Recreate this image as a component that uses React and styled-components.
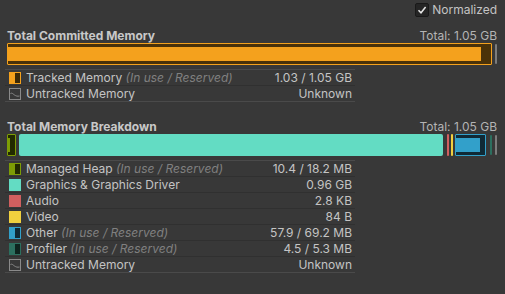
import React from "react";
import styled, { createGlobalStyle } from "styled-components";

const Global = createGlobalStyle`
  html, body { margin: 0; padding: 0; background: #383838; }
  body { font-family: Inter, "Noto Sans", sans-serif; font-size: 12px; color: #c4c4c4; }
`;

const Page = styled.div`
  width: 505px;
  height: 294px;
  background: #383838;
  display: flex;
  flex-direction: column;
  box-sizing: border-box;
`;

const Toolbar = styled.div`
  display: flex;
  justify-content: flex-end;
  align-items: center;
  height: 14px;
  padding: 3px 8px 0 0;
  gap: 3px;
`;

const CheckBox = styled.span`
  width: 12px;
  height: 12px;
  border: 1px solid #191919;
  border-radius: 2px;
  background: #252525;
  display: flex;
  align-items: center;
  justify-content: center;
`;

const ToolbarLabel = styled.span`
  line-height: 14px;
  color: #c4c4c4;
`;

const Section = styled.div`
  display: flex;
  flex-direction: column;
  margin-top: ${(p) => p.$top}px;
`;

const TitleRow = styled.div`
  display: flex;
  justify-content: space-between;
  align-items: flex-end;
  height: 16px;
  padding: 0 8px 0 7px;
`;

const Title = styled.span`
  font-weight: 700;
  color: #c8c8c8;
  line-height: 14px;
`;

const Total = styled.span`
  color: #b4b4b4;
  line-height: 14px;
`;

const Bar = styled.div`
  display: flex;
  align-items: stretch;
  height: 22px;
  margin-left: 7px;
  width: 490px;
`;

const Segment = styled.div`
  flex: none;
  box-sizing: border-box;
  margin-right: ${(p) => p.$gap || 0}px;
  background: ${(p) => p.$color};
  border-radius: ${(p) => (p.$round ? "2px" : "0")};
`;

const Thin = styled.div`
  flex: none;
  width: 2px;
  margin: ${(p) => (p.$inset ? "1px" : "0")} 0;
  margin-right: ${(p) => p.$gap || 0}px;
  background: ${(p) => p.$color};
  border-radius: 1px;
`;

const Reserved = styled.div`
  flex: none;
  box-sizing: border-box;
  border: 1px solid ${(p) => p.$color};
  border-radius: 1px;
  background: ${(p) => p.$dark};
  margin-right: ${(p) => p.$gap || 0}px;
  padding: 3px 0;
  display: flex;
`;

const Used = styled.div`
  background: ${(p) => p.$color};
  height: 100%;
`;

const Table = styled.div`
  width: 350px;
  margin: 4px 0 0 5px;
  border-top: 1px solid #4a4a4a;
  display: flex;
  flex-direction: column;
`;

const Row = styled.div`
  display: flex;
  align-items: center;
  height: 15px;
  padding: 0 3px 0 4px;
  border-bottom: 1px solid ${(p) => (p.$last ? "#4a4a4a" : "#303030")};
`;

const Label = styled.span`
  margin-left: 5px;
  flex: 1;
  white-space: nowrap;
  color: #c4c4c4;
`;

const Hint = styled.span`
  font-style: italic;
  color: #808080;
`;

const Value = styled.span`
  color: #c4c4c4;
  white-space: nowrap;
`;

const SolidIcon = styled.span`
  width: 12px;
  height: 12px;
  flex: none;
  background: ${(p) => p.$color};
`;

const SplitIcon = styled.span`
  width: 12px;
  height: 12px;
  flex: none;
  box-sizing: border-box;
  border: 1px solid ${(p) => p.$color};
  background: linear-gradient(to right, ${(p) => p.$color} 50%, ${(p) => p.$dark} 50%);
`;

const UntrackedIcon = () => (
  <svg width="12" height="12" viewBox="0 0 12 12" style={{ flex: "none" }}>
    <rect x="0.5" y="0.5" width="11" height="11" fill="none" stroke="#8a8a8a" />
    <path d="M1.5 5.5 C3 4.5 4 6 5.5 7 C7 8 8.5 8.5 10.5 8" fill="none" stroke="#8a8a8a" strokeWidth="1" />
  </svg>
);

const Check = () => (
  <svg width="10" height="10" viewBox="0 0 10 10">
    <path d="M1.5 5.2 L4 7.8 L8.6 2" fill="none" stroke="#e6e6e6" strokeWidth="1.5" />
  </svg>
);

const Icon = ({ kind, color, dark }) => {
  if (kind === "split") return <SplitIcon $color={color} $dark={dark} />;
  if (kind === "untracked") return <UntrackedIcon />;
  return <SolidIcon $color={color} />;
};

const committedRows = [
  { kind: "split", color: "#f4a11d", dark: "#3b2907", label: "Tracked Memory", hint: true, value: "1.03 / 1.05 GB" },
  { kind: "untracked", label: "Untracked Memory", value: "Unknown" },
];

const breakdownRows = [
  { kind: "split", color: "#7d9c05", dark: "#222a00", label: "Managed Heap", hint: true, value: "10.4 / 18.2 MB" },
  { kind: "solid", color: "#63dcc3", label: "Graphics & Graphics Driver", value: "0.96 GB" },
  { kind: "solid", color: "#d05f5f", label: "Audio", value: "2.8 KB" },
  { kind: "solid", color: "#f1d03e", label: "Video", value: "84 B" },
  { kind: "split", color: "#32a0ca", dark: "#102a36", label: "Other", hint: true, value: "57.9 / 69.2 MB" },
  { kind: "split", color: "#2c6f5f", dark: "#0d231e", label: "Profiler", hint: true, value: "4.5 / 5.3 MB" },
  { kind: "untracked", label: "Untracked Memory", value: "Unknown" },
];

const MemoryTable = ({ rows }) => (
  <Table>
    {rows.map((r, i) => (
      <Row key={r.label} $last={i === rows.length - 1}>
        <Icon kind={r.kind} color={r.color} dark={r.dark} />
        <Label>
          {r.label}
          {r.hint && <Hint> (In use / Reserved)</Hint>}
        </Label>
        <Value>{r.value}</Value>
      </Row>
    ))}
  </Table>
);

export default function App() {
  return (
    <Page>
      <Global />
      <Toolbar>
        <CheckBox>
          <Check />
        </CheckBox>
        <ToolbarLabel>Normalized</ToolbarLabel>
      </Toolbar>

      <Section $top={10}>
        <TitleRow>
          <Title>Total Committed Memory</Title>
          <Total>Total: 1.05 GB</Total>
        </TitleRow>
        <Bar>
          <Reserved $color="#f4a11d" $dark="#4a3209" $gap={3} style={{ width: 485 }}>
            <Used $color="#f4a11d" style={{ width: "98%" }} />
          </Reserved>
          <Thin $color="#7c7c7c" $inset />
        </Bar>
        <MemoryTable rows={committedRows} />
      </Section>

      <Section $top={16}>
        <TitleRow>
          <Title>Total Memory Breakdown</Title>
          <Total>Total: 1.05 GB</Total>
        </TitleRow>
        <Bar>
          <Reserved $color="#7d9c05" $dark="#222a00" $gap={3} style={{ width: 9 }}>
            <Used $color="#7d9c05" style={{ width: "30%" }} />
          </Reserved>
          <Segment $color="#63dcc3" $round $gap={4} style={{ width: 424 }} />
          <Thin $color="#d05f5f" $gap={2} />
          <Thin $color="#f1d03e" $gap={2} />
          <Reserved $color="#32a0ca" $dark="#102a36" $gap={4} style={{ width: 31 }}>
            <Used $color="#32a0ca" style={{ width: "83%" }} />
          </Reserved>
          <Thin $color="#2c6f5f" $gap={3} $inset />
          <Thin $color="#7c7c7c" $inset />
        </Bar>
        <MemoryTable rows={breakdownRows} />
      </Section>
    </Page>
  );
}
